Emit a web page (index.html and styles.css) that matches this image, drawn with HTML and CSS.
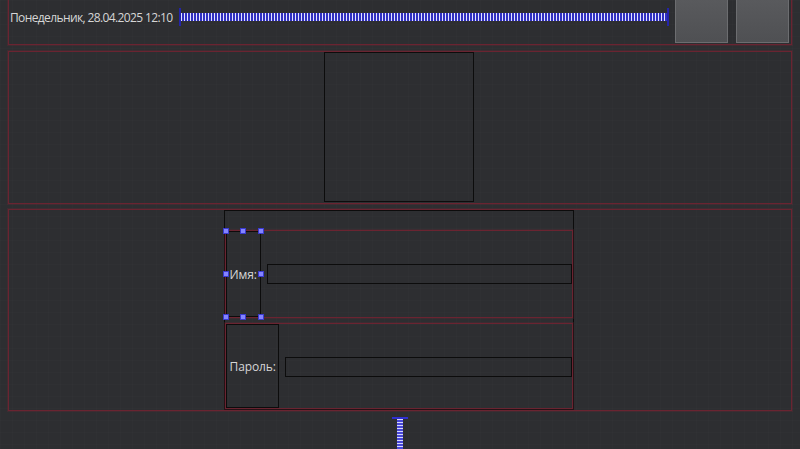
FILE: index.html
```html
<!DOCTYPE html>
<html lang="ru">
<head>
<meta charset="utf-8">
<title>Designer</title>
<link rel="stylesheet" href="styles.css">
</head>
<body>
<div class="panel top">
  <span class="date">Понедельник, 28.04.2025 12:10</span>
  <div class="bar"><div class="ticks"></div></div>
  <div class="btn"></div>
  <div class="btn"></div>
</div>
<div class="panel middle">
  <div class="square"></div>
</div>
<div class="panel bottom">
  <div class="form">
    <div class="row">
      <div class="label sel">Имя:
        <i class="h h1"></i><i class="h h2"></i><i class="h h3"></i>
        <i class="h h4"></i><i class="h h5"></i>
        <i class="h h6"></i><i class="h h7"></i><i class="h h8"></i>
      </div>
      <div class="input"></div>
    </div>
    <div class="row row2">
      <div class="label">Пароль:</div>
      <div class="input"></div>
    </div>
  </div>
</div>
<div class="splitter">
  <div class="cap"></div>
  <div class="stem"></div>
</div>
</body>
</html>
```
FILE: styles.css
```css
html, body {
  margin: 0;
  height: 449px;
  overflow: hidden;
}
body {
  padding: 0 8px;
  background-color: #2d2e31;
  background-image:
    linear-gradient(90deg, rgba(255,255,255,0.012) 1px, transparent 1px),
    linear-gradient(rgba(255,255,255,0.012) 1px, transparent 1px);
  background-size: 12px 12px;
  font-family: "Open Sans", "Noto Sans", sans-serif;
  font-size: 12px;
  color: #d6d6d6;
}
.panel {
  border: 1px solid #6a2431;
  box-shadow: 0 0 0 1px rgba(110, 36, 50, 0.3);
  box-sizing: border-box;
}
.top {
  margin-top: -10px;
  height: 55px;
  display: flex;
  align-items: center;
  padding: 0 2px 1px 1px;
}
.date {
  white-space: nowrap;
  letter-spacing: -0.62px;
  flex: none;
}
.bar {
  flex: 1;
  margin-left: 7px;
  margin-right: 6px;
  height: 18px;
  border-left: 2px solid #2424a8;
  border-right: 2px solid #2424a8;
  display: flex;
  align-items: center;
  margin-top: -1px;
}
.ticks {
  flex: 1;
  height: 8px;
  background: repeating-linear-gradient(90deg, #e4e4ff 0 1px, #3030c0 1px 3px);
}
.btn {
  flex: none;
  width: 53px;
  align-self: stretch;
  box-sizing: border-box;
  border: 1px solid #6c6d70;
  border-top: none;
  background: linear-gradient(#5b5c5f, #4f5053);
}
.btn + .btn {
  margin-left: 8px;
}
.middle {
  margin-top: 6px;
  height: 153px;
  display: flex;
  justify-content: center;
}
.square {
  width: 150px;
  height: 150px;
  box-sizing: border-box;
  border: 1px solid #0c0c0c;
  margin-right: 2px;
}
.bottom {
  margin-top: 5px;
  height: 202px;
  display: flex;
  justify-content: center;
}
.form {
  width: 350px;
  height: 200px;
  box-sizing: border-box;
  border: 1px solid #0c0c0c;
  padding-top: 19px;
  display: flex;
  flex-direction: column;
  gap: 5px;
  margin-right: 3px;
}
.row {
  height: 88px;
  box-sizing: border-box;
  border: 1px solid #6a2431;
  box-shadow: 0 0 0 1px rgba(110, 36, 50, 0.25);
  display: flex;
  align-items: center;
}
.row2 {
  height: 86px;
}
.label {
  align-self: stretch;
  border: 1px solid #0c0c0c;
  padding: 0 3px 0 3px;
  display: flex;
  align-items: center;
  position: relative;
  white-space: nowrap;
  letter-spacing: -0.1px;
}
.row2 .label {
  padding-right: 2px;
}
.input {
  flex: 1;
  height: 20px;
  box-sizing: border-box;
  border: 1px solid #0c0c0c;
  margin-left: 6px;
}
.row2 .input {
  margin-top: 2px;
}
.h {
  position: absolute;
  width: 6px;
  height: 6px;
  box-sizing: border-box;
  background: #8484ff;
  border: 1px solid #3a3ad0;
}
.h1 { left: -4px; top: -4px; }
.h2 { left: calc(50% - 3px); top: -4px; }
.h3 { right: -4px; top: -4px; }
.h4 { left: -4px; top: calc(50% - 3px); }
.h5 { right: -4px; top: calc(50% - 3px); }
.h6 { left: -4px; bottom: -4px; }
.h7 { left: calc(50% - 3px); bottom: -4px; }
.h8 { right: -4px; bottom: -4px; }
.splitter {
  margin-top: 6px;
  display: flex;
  flex-direction: column;
  align-items: center;
  margin-right: 1px;
}
.cap {
  width: 16px;
  height: 2px;
  background: #2f2fd0;
}
.stem {
  width: 6px;
  height: 40px;
  background: repeating-linear-gradient(#d8d8ff 0 1px, #4848d8 1px 3px);
}
```
